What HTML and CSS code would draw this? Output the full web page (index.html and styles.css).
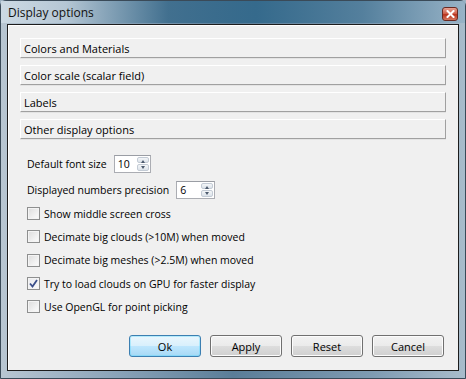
FILE: index.html
```html
<!DOCTYPE html>
<html lang="en">
<head>
    <meta charset="UTF-8">
    <title>Display options</title>
    <link rel="stylesheet" href="styles.css">
</head>
<body>
    <div class="window">
        <div class="titlebar">
            <span class="title">Display options</span>
            <button class="close" title="Close">
                <svg width="9" height="8" viewBox="0 0 9 8"><path d="M1.5 1 L7.5 7 M7.5 1 L1.5 7" stroke="#fff" stroke-width="2" stroke-linecap="square"/></svg>
            </button>
        </div>
        <div class="client">
            <div class="sections">
                <div class="section">Colors and Materials</div>
                <div class="section">Color scale (scalar field)</div>
                <div class="section">Labels</div>
                <div class="section">Other display options</div>
            </div>

            <div class="options">
                <div class="spins">
                    <div class="spin-row">
                        <span>Default font size</span>
                        <div class="spinbox">
                            <span class="value">10</span>
                            <div class="arrows">
                                <span class="arrow up"></span>
                                <span class="arrow down"></span>
                            </div>
                        </div>
                    </div>
                    <div class="spin-row">
                        <span>Displayed numbers precision</span>
                        <div class="spinbox wide">
                            <span class="value">6</span>
                            <div class="arrows">
                                <span class="arrow up"></span>
                                <span class="arrow down"></span>
                            </div>
                        </div>
                    </div>
                </div>

                <div class="checks">
                    <label class="check"><span class="box"></span>Show middle screen cross</label>
                    <label class="check"><span class="box"></span>Decimate big clouds (&gt;10M) when moved</label>
                    <label class="check"><span class="box"></span>Decimate big meshes (&gt;2.5M) when moved</label>
                    <label class="check"><span class="box checked"><svg width="9" height="9" viewBox="0 0 9 9"><path d="M1 4.5 L3.5 7.5 L8 1" fill="none" stroke="#3b4f8a" stroke-width="1.8"/></svg></span>Try to load clouds on GPU for faster display</label>
                    <label class="check"><span class="box"></span>Use OpenGL for point picking</label>
                </div>
            </div>

            <div class="footer">
                <button class="btn default">Ok</button>
                <button class="btn">Apply</button>
                <button class="btn">Reset</button>
                <button class="btn">Cancel</button>
            </div>
        </div>
    </div>
</body>
</html>
```

FILE: styles.css
```css
* {
    margin: 0;
    padding: 0;
    box-sizing: border-box;
}

body {
    font-family: "Open Sans", "Noto Sans", sans-serif;
    font-size: 10.5px;
    color: #000;
    width: 466px;
    height: 379px;
    overflow: hidden;
    background: #9fb2c2;
}

.window {
    width: 466px;
    height: 379px;
    display: flex;
    flex-direction: column;
    padding: 0 6px 7px 6px;
    background: linear-gradient(90deg, #b8c6d2 0%, #8aa3b8 25%, #5a7d98 50%, #7f9bb2 80%, #a9bccb 100%);
    border: 1px solid #3a4a58;
    border-radius: 6px 6px 0 0;
}

.titlebar {
    height: 22px;
    display: flex;
    align-items: center;
    justify-content: space-between;
    background: linear-gradient(90deg, rgba(205, 218, 228, 0.95) 0%, rgba(185, 202, 215, 0.85) 14%, rgba(60, 108, 140, 0.9) 36%, #356a8c 55%, rgba(80, 125, 155, 0.9) 78%, rgba(150, 178, 198, 0.9) 100%);
    margin: 0 -6px;
    padding: 0 7px 0 7px;
}

.title {
    font-size: 12px;
    color: #111;
    padding-top: 1px;
}

.close {
    width: 16px;
    height: 14px;
    margin-top: 3px;
    border: 1px solid #6a2a22;
    border-radius: 3px;
    background: linear-gradient(#e8a293 0%, #d0624c 45%, #b8321c 55%, #d5775e 100%);
    display: flex;
    align-items: center;
    justify-content: center;
}

.client {
    flex: 1;
    display: flex;
    flex-direction: column;
    margin-top: 1px;
    background: #f0f0f0;
    border: 1px solid #1c1c1c;
    box-shadow: inset 1px 1px 0 #ffffff;
    padding: 13px 12px 13px 12px;
}

.sections {
    display: flex;
    flex-direction: column;
    gap: 7px;
}

.section {
    height: 20px;
    display: flex;
    align-items: center;
    padding-left: 3px;
    font-size: 11px;
    background: #f0f0f0;
    border-top: 1px solid #ffffff;
    border-left: 1px solid #ffffff;
    border-right: 1px solid #a0a0a0;
    border-bottom: 1px solid #a0a0a0;
    box-shadow: 0 1px 0 #e3e3e3;
}

.options {
    padding: 16px 0 0 7px;
}

.spins {
    display: flex;
    flex-direction: column;
    gap: 9px;
    margin-bottom: 4px;
}

.spin-row {
    display: flex;
    align-items: center;
    gap: 7px;
    height: 17px;
}

.spinbox {
    display: flex;
    align-items: stretch;
    height: 18px;
    background: #fff;
    border: 1px solid #abadb3;
    border-top-color: #9a9da4;
}

.spinbox .value {
    display: flex;
    align-items: center;
    padding: 0 3px 0 3px;
    min-width: 22px;
}

.spinbox.wide .value {
    min-width: 24px;
}

.arrows {
    display: flex;
    flex-direction: column;
    width: 12px;
    margin: 1px 1px 1px 0;
    gap: 1px;
}

.arrow {
    flex: 1;
    position: relative;
    background: linear-gradient(#f4f6f8, #dce3ea);
    border: 1px solid #c3cbd5;
    border-radius: 2px;
}

.arrow::after {
    content: "";
    position: absolute;
    left: 3px;
    top: 2px;
    border-left: 2.5px solid transparent;
    border-right: 2.5px solid transparent;
}

.arrow.up::after {
    border-bottom: 3px solid #4d5b6e;
}

.arrow.down::after {
    top: 1px;
    border-top: 3px solid #4d5b6e;
}

.checks {
    display: flex;
    flex-direction: column;
}

.check {
    display: flex;
    align-items: center;
    gap: 4px;
    height: 23.3px;
}

.box {
    width: 13px;
    height: 13px;
    border: 1px solid #8e8f8f;
    background: linear-gradient(135deg, #dcdcdc, #f4f4f4 70%, #fbfbfb);
    box-shadow: inset 0 0 0 1px #f4f4f4;
    display: flex;
    align-items: center;
    justify-content: center;
}

.box.checked {
    background: linear-gradient(135deg, #e9eaee, #fafafa);
}

.footer {
    margin-top: auto;
    display: flex;
    justify-content: flex-end;
    gap: 9px;
    padding-right: 2px;
}

.btn {
    width: 72px;
    height: 22px;
    font-family: inherit;
    font-size: 11px;
    color: #000;
    border: 1px solid #707070;
    border-radius: 3px;
    background: linear-gradient(#f2f2f2 0%, #ebebeb 48%, #dddddd 52%, #cfcfcf 100%);
    box-shadow: inset 0 0 0 1px #fcfcfc;
}

.btn.default {
    border-color: #3c7fb1;
    background: linear-gradient(#eaf6fd 0%, #d9f0fc 48%, #bee6fd 52%, #a7d9f5 100%);
    box-shadow: inset 0 0 0 1px #48d5fd55;
}
```
